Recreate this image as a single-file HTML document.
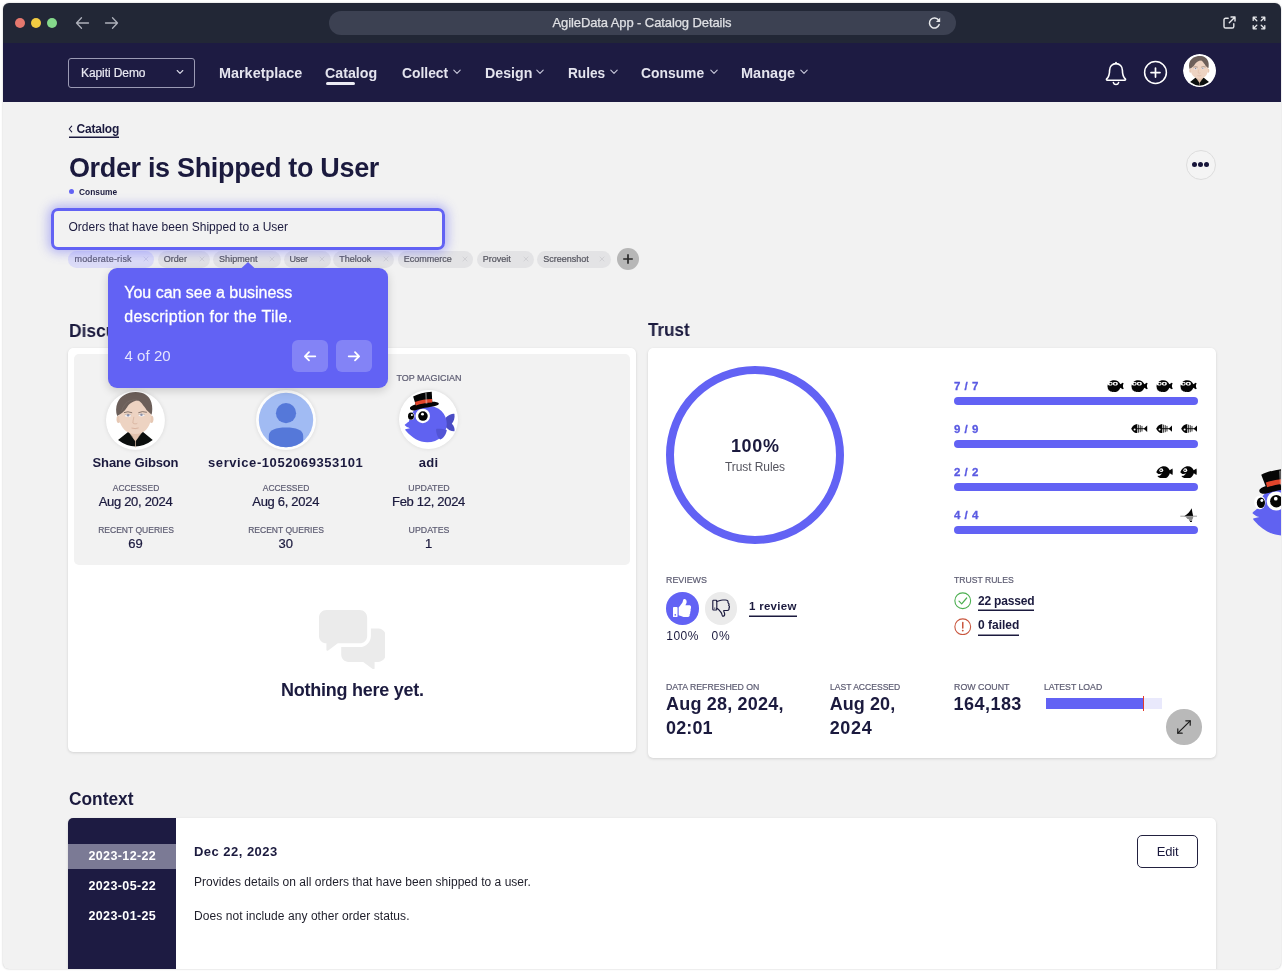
<!DOCTYPE html>
<html lang="en"><head><meta charset="utf-8"><title>AgileData App - Catalog Details</title>
<style>
html,body{margin:0;padding:0;}
body{width:1282px;height:975px;background:#fff;font-family:"Liberation Sans", sans-serif;position:relative;overflow:hidden;}
#win{position:absolute;left:3px;top:3px;width:1278px;height:966px;border-radius:6px;overflow:hidden;background:#f2f2f2;box-shadow:0 0 2px rgba(0,0,0,.25);}

#off{position:absolute;left:-3px;top:-3px;width:1282px;height:975px;will-change:transform;}
</style></head><body>
<div id="win"><div id="off">
<div style="position:absolute;left:0px;top:0px;width:1282px;height:43px;background:#222736;"></div>
<div style="position:absolute;left:15px;top:18px;width:10px;height:10px;background:#e5786e;border-radius:50%;"></div>
<div style="position:absolute;left:31px;top:18px;width:10px;height:10px;background:#f1cb42;border-radius:50%;"></div>
<div style="position:absolute;left:47px;top:18px;width:10px;height:10px;background:#85d98b;border-radius:50%;"></div>
<svg style="position:absolute;left:75px;top:16px;" width="45" height="14" viewBox="0 0 45 14"><g fill="none" stroke="#aeb1bb" stroke-width="1.300" stroke-linecap="round" stroke-linejoin="round"><path d="M13.5 7H1.5M6.5 1.8L1.5 7l5 5.2"/><path d="M30.5 7h12M37.5 1.8l5 5.2-5 5.2"/></g></svg>
<div style="position:absolute;left:329px;top:11px;width:627px;height:24px;background:#3c4152;border-radius:12px;"></div>
<div style="position:absolute;top:15.80px;font-size:13px;line-height:13px;font-weight:400;color:#dfe0e4;white-space:nowrap;letter-spacing:-0.1px;left:642px;transform:translateX(-50%);-webkit-text-stroke:.25px #dfe0e4;">AgileData App - Catalog Details</div>
<svg style="position:absolute;left:927px;top:16px;" width="15" height="14" viewBox="0 0 15 14"><path d="M11.6 4.2A5 5 0 1 0 12.2 8.6" fill="none" stroke="#e6e7ea" stroke-width="1.5" stroke-linecap="round"/><path d="M13.2 1.6v4.3H8.9z" fill="#e6e7ea"/></svg>
<svg style="position:absolute;left:1223px;top:16px;" width="13" height="13" viewBox="0 0 13 13"><g fill="none" stroke="#e6e7ea" stroke-width="1.4" stroke-linecap="round" stroke-linejoin="round"><path d="M5.2 2.2H2.6A1.6 1.6 0 0 0 1 3.8v6.6A1.6 1.6 0 0 0 2.6 12h6.6a1.6 1.6 0 0 0 1.6-1.6V7.8"/><path d="M8 1h4v4M12 1L6.3 6.7"/></g></svg>
<svg style="position:absolute;left:1252px;top:16px;" width="14" height="14" viewBox="0 0 14 14"><g fill="none" stroke="#e6e7ea" stroke-width="1.3" stroke-linecap="round" stroke-linejoin="round"><path d="M1.2 4.4V1.2h3.2M1.2 1.2l3.6 3.6"/><path d="M9.6 1.2h3.2v3.2M12.8 1.2L9.2 4.8"/><path d="M1.2 9.6v3.2h3.2M1.2 12.8l3.6-3.6"/><path d="M12.8 9.6v3.2H9.600M12.800 12.800L9.200 9.200"/></g></svg>
<div style="position:absolute;left:0px;top:43px;width:1282px;height:59px;background:#1d1b42;"></div>
<div style="position:absolute;left:68px;top:58px;width:127px;height:30px;box-sizing:border-box;border:1px solid #9b9ab4;border-radius:3px;"></div>
<div style="position:absolute;top:66.54px;font-size:12px;line-height:12px;font-weight:400;color:#e9e9f2;white-space:nowrap;letter-spacing:-0.09px;left:81px;-webkit-text-stroke:.2px #e9e9f2;">Kapiti Demo</div>
<svg style="position:absolute;left:176px;top:69px;" width="8" height="6" viewBox="0 0 8 6"><path d="M1.2 1.5L4 4.3l2.800-2.800" fill="none" stroke="#d8d8e6" stroke-width="1.1" stroke-linecap="round" stroke-linejoin="round"/></svg>
<div style="position:absolute;top:64.90px;font-size:15px;line-height:15px;font-weight:700;color:#e4e4ee;white-space:nowrap;left:218.7px;transform:scaleX(0.9605);transform-origin:0 50%;">Marketplace</div>
<div style="position:absolute;top:64.90px;font-size:15px;line-height:15px;font-weight:700;color:#e4e4ee;white-space:nowrap;left:325.2px;transform:scaleX(0.9482);transform-origin:0 50%;">Catalog</div>
<div style="position:absolute;top:64.90px;font-size:15px;line-height:15px;font-weight:700;color:#e4e4ee;white-space:nowrap;left:401.9px;transform:scaleX(0.9237);transform-origin:0 50%;">Collect</div>
<svg style="position:absolute;left:453px;top:68.5px;" width="8" height="6" viewBox="0 0 8 6"><path d="M0.800 1.200L4 4.400l3.200-3.200" fill="none" stroke="#c9c9dc" stroke-width="1.100" stroke-linecap="round" stroke-linejoin="round"/></svg>
<div style="position:absolute;top:64.90px;font-size:15px;line-height:15px;font-weight:700;color:#e4e4ee;white-space:nowrap;left:484.6px;transform:scaleX(0.9458);transform-origin:0 50%;">Design</div>
<svg style="position:absolute;left:536px;top:68.5px;" width="8" height="6" viewBox="0 0 8 6"><path d="M0.800 1.200L4 4.400l3.200-3.200" fill="none" stroke="#c9c9dc" stroke-width="1.100" stroke-linecap="round" stroke-linejoin="round"/></svg>
<div style="position:absolute;top:64.90px;font-size:15px;line-height:15px;font-weight:700;color:#e4e4ee;white-space:nowrap;left:568.2px;transform:scaleX(0.9113);transform-origin:0 50%;">Rules</div>
<svg style="position:absolute;left:610px;top:68.5px;" width="8" height="6" viewBox="0 0 8 6"><path d="M0.800 1.200L4 4.400l3.200-3.200" fill="none" stroke="#c9c9dc" stroke-width="1.100" stroke-linecap="round" stroke-linejoin="round"/></svg>
<div style="position:absolute;top:64.90px;font-size:15px;line-height:15px;font-weight:700;color:#e4e4ee;white-space:nowrap;left:641.3px;transform:scaleX(0.9235);transform-origin:0 50%;">Consume</div>
<svg style="position:absolute;left:710px;top:68.5px;" width="8" height="6" viewBox="0 0 8 6"><path d="M0.800 1.200L4 4.400l3.200-3.200" fill="none" stroke="#c9c9dc" stroke-width="1.100" stroke-linecap="round" stroke-linejoin="round"/></svg>
<div style="position:absolute;top:64.90px;font-size:15px;line-height:15px;font-weight:700;color:#e4e4ee;white-space:nowrap;left:741.3px;transform:scaleX(0.9687);transform-origin:0 50%;">Manage</div>
<svg style="position:absolute;left:800px;top:68.5px;" width="8" height="6" viewBox="0 0 8 6"><path d="M0.800 1.200L4 4.400l3.200-3.200" fill="none" stroke="#c9c9dc" stroke-width="1.100" stroke-linecap="round" stroke-linejoin="round"/></svg>
<div style="position:absolute;left:326px;top:82px;width:29px;height:3px;background:#ececf4;border-radius:2px;"></div>
<svg style="position:absolute;left:1104px;top:59.5px;" width="24" height="27" viewBox="0 0 24 27"><g fill="none" stroke="#fff" stroke-width="1.6" stroke-linecap="round" stroke-linejoin="round"><path d="M12 3.600c-3.700 0-6.400 2.900-6.400 6.600 0 5.200-1.500 7.300-2.900 8.700-.5.500-.2 1.400.6 1.400h17.400c.8 0 1.100-.9.600-1.400-1.400-1.400-2.900-3.500-2.900-8.700 0-3.700-2.700-6.600-6.400-6.600z"/><path d="M9.400 22.600a2.700 2.700 0 0 0 5.200 0"/><path d="M12 2.600v1"/></g></svg>
<svg style="position:absolute;left:1143px;top:60px;" width="25" height="25" viewBox="0 0 25 25"><g fill="none" stroke="#fff" stroke-linecap="round"><circle cx="12.500" cy="12.500" r="10.900" stroke-width="1.500"/><path d="M8 12.600h9M12.500 8.100v9" stroke-width="1.700"/></g></svg>
<svg style="position:absolute;left:68.3px;top:124.9px;" width="5" height="8" viewBox="0 0 5 8"><path d="M3.700 1.200L1.200 4 3.700 6.800" fill="none" stroke="#1b1a3e" stroke-width="1.100" stroke-linecap="round" stroke-linejoin="round"/></svg>
<div style="position:absolute;top:123.44px;font-size:12px;line-height:12px;font-weight:700;color:#1b1a3e;white-space:nowrap;letter-spacing:-0.2px;left:76.5px;">Catalog</div>
<div style="position:absolute;left:68.5px;top:136px;width:50.5px;height:1px;background:#1b1a3e;opacity:.5"></div>
<div style="position:absolute;left:68.5px;top:137px;width:50.5px;height:1px;background:#1b1a3e"></div>
<div style="position:absolute;top:155.14px;font-size:27px;line-height:27px;font-weight:700;color:#1b1a3e;white-space:nowrap;letter-spacing:-0.33px;left:68.9px;">Order is Shipped to User</div>
<div style="position:absolute;left:68.7px;top:189.3px;width:5px;height:5px;background:#6262f4;border-radius:50%;"></div>
<div style="position:absolute;top:187.06px;font-size:9.5px;line-height:9.5px;font-weight:700;color:#1b1a3e;white-space:nowrap;left:79px;transform:scaleX(0.8791);transform-origin:0 50%;">Consume</div>
<div style="position:absolute;left:1186px;top:150px;width:30px;height:30px;background:#f4f4f4;box-sizing:border-box;border:1px solid #dcdcdc;border-radius:50%;"></div>
<div style="position:absolute;left:1192.1px;top:162.2px;width:5px;height:5px;background:#17153a;border-radius:50%;"></div>
<div style="position:absolute;left:1198.2px;top:162.2px;width:5px;height:5px;background:#17153a;border-radius:50%;"></div>
<div style="position:absolute;left:1204.3px;top:162.2px;width:5px;height:5px;background:#17153a;border-radius:50%;"></div>
<div style="position:absolute;top:220.84px;font-size:12px;line-height:12px;font-weight:400;color:#1b1a3e;white-space:nowrap;letter-spacing:0.02px;left:68.5px;">Orders that have been Shipped to a User</div>
<div style="position:absolute;left:68.3px;top:251px;width:86.2px;height:16.5px;background:#dcdcf7;border-radius:8.500px;"></div>
<div style="position:absolute;top:254.68px;font-size:9px;line-height:9px;font-weight:400;color:#5d5c78;white-space:nowrap;letter-spacing:0.17px;left:74.5px;-webkit-text-stroke:.2px;">moderate-risk</div>
<svg style="position:absolute;left:143.0px;top:256.3px;" width="6" height="6" viewBox="0 0 6 6"><path d="M0.700 0.700l4.600 4.600M5.300 0.700L0.700 5.300" stroke="#c4c4e6" stroke-width="0.900" fill="none"/></svg>
<div style="position:absolute;left:158px;top:251px;width:52px;height:16.5px;background:#e3e3e5;border-radius:8.500px;"></div>
<div style="position:absolute;top:254.68px;font-size:9px;line-height:9px;font-weight:400;color:#55555f;white-space:nowrap;letter-spacing:0.06px;left:163.7px;-webkit-text-stroke:.2px;">Order</div>
<svg style="position:absolute;left:198.5px;top:256.3px;" width="6" height="6" viewBox="0 0 6 6"><path d="M0.700 0.700l4.600 4.600M5.300 0.700L0.700 5.300" stroke="#cfcfd3" stroke-width="0.900" fill="none"/></svg>
<div style="position:absolute;left:213px;top:251px;width:67.5px;height:16.5px;background:#e3e3e5;border-radius:8.500px;"></div>
<div style="position:absolute;top:254.68px;font-size:9px;line-height:9px;font-weight:400;color:#55555f;white-space:nowrap;letter-spacing:0.07px;left:219px;-webkit-text-stroke:.2px;">Shipment</div>
<svg style="position:absolute;left:269.0px;top:256.3px;" width="6" height="6" viewBox="0 0 6 6"><path d="M0.700 0.700l4.600 4.600M5.300 0.700L0.700 5.300" stroke="#cfcfd3" stroke-width="0.900" fill="none"/></svg>
<div style="position:absolute;left:284px;top:251px;width:46.5px;height:16.5px;background:#e3e3e5;border-radius:8.500px;"></div>
<div style="position:absolute;top:254.68px;font-size:9px;line-height:9px;font-weight:400;color:#55555f;white-space:nowrap;letter-spacing:-0.17px;left:289.5px;-webkit-text-stroke:.2px;">User</div>
<svg style="position:absolute;left:319.0px;top:256.3px;" width="6" height="6" viewBox="0 0 6 6"><path d="M0.700 0.700l4.600 4.600M5.300 0.700L0.700 5.300" stroke="#cfcfd3" stroke-width="0.900" fill="none"/></svg>
<div style="position:absolute;left:333.3px;top:251px;width:61.0px;height:16.5px;background:#e3e3e5;border-radius:8.500px;"></div>
<div style="position:absolute;top:254.68px;font-size:9px;line-height:9px;font-weight:400;color:#55555f;white-space:nowrap;left:339.3px;-webkit-text-stroke:.2px;">Thelook</div>
<svg style="position:absolute;left:382.8px;top:256.3px;" width="6" height="6" viewBox="0 0 6 6"><path d="M0.700 0.700l4.600 4.600M5.300 0.700L0.700 5.300" stroke="#cfcfd3" stroke-width="0.900" fill="none"/></svg>
<div style="position:absolute;left:397.7px;top:251px;width:75.5px;height:16.5px;background:#e3e3e5;border-radius:8.500px;"></div>
<div style="position:absolute;top:254.68px;font-size:9px;line-height:9px;font-weight:400;color:#55555f;white-space:nowrap;left:403.7px;-webkit-text-stroke:.2px;">Ecommerce</div>
<svg style="position:absolute;left:461.7px;top:256.3px;" width="6" height="6" viewBox="0 0 6 6"><path d="M0.700 0.700l4.600 4.600M5.300 0.700L0.700 5.300" stroke="#cfcfd3" stroke-width="0.900" fill="none"/></svg>
<div style="position:absolute;left:476.7px;top:251px;width:57.50000000000006px;height:16.5px;background:#e3e3e5;border-radius:8.500px;"></div>
<div style="position:absolute;top:254.68px;font-size:9px;line-height:9px;font-weight:400;color:#55555f;white-space:nowrap;left:482.7px;-webkit-text-stroke:.2px;">Proveit</div>
<svg style="position:absolute;left:522.7px;top:256.3px;" width="6" height="6" viewBox="0 0 6 6"><path d="M0.700 0.700l4.600 4.600M5.300 0.700L0.700 5.300" stroke="#cfcfd3" stroke-width="0.900" fill="none"/></svg>
<div style="position:absolute;left:537.2px;top:251px;width:73.5px;height:16.5px;background:#e3e3e5;border-radius:8.500px;"></div>
<div style="position:absolute;top:254.68px;font-size:9px;line-height:9px;font-weight:400;color:#55555f;white-space:nowrap;left:543.2px;-webkit-text-stroke:.2px;">Screenshot</div>
<svg style="position:absolute;left:599.2px;top:256.3px;" width="6" height="6" viewBox="0 0 6 6"><path d="M0.700 0.700l4.600 4.600M5.300 0.700L0.700 5.300" stroke="#cfcfd3" stroke-width="0.900" fill="none"/></svg>
<div style="position:absolute;left:617.3px;top:248px;width:22px;height:22px;background:#b7b7b7;border-radius:50%;"></div>
<svg style="position:absolute;left:622.3px;top:253px;" width="12" height="12" viewBox="0 0 12 12"><path d="M6 1.200v9.600M1.200 6h9.600" stroke="#2a2a2a" stroke-width="1.700" fill="none"/></svg>
<div style="position:absolute;top:322.06px;font-size:18px;line-height:18px;font-weight:700;color:#1b1a3e;white-space:nowrap;left:68.5px;transform:scaleX(0.9677);transform-origin:0 50%;">Discussion</div>
<div style="position:absolute;top:321.26px;font-size:18px;line-height:18px;font-weight:700;color:#1b1a3e;white-space:nowrap;left:648.3px;transform:scaleX(0.9452);transform-origin:0 50%;">Trust</div>
<div style="position:absolute;top:790.36px;font-size:18px;line-height:18px;font-weight:700;color:#1b1a3e;white-space:nowrap;left:68.5px;transform:scaleX(0.9626);transform-origin:0 50%;">Context</div>
<div style="position:absolute;left:68px;top:348px;width:568px;height:404px;background:#fff;border-radius:5px;box-shadow:0 1px 3px rgba(0,0,0,.13),0 0 1px rgba(0,0,0,.08);"></div>
<div style="position:absolute;left:74px;top:354px;width:556px;height:211px;background:#f2f2f2;border-radius:5px;"></div>
<div style="position:absolute;left:648px;top:348px;width:568px;height:410px;background:#fff;border-radius:5px;box-shadow:0 1px 3px rgba(0,0,0,.13),0 0 1px rgba(0,0,0,.08);"></div>
<div style="position:absolute;top:455.70px;font-size:13px;line-height:13px;font-weight:700;color:#1b1a3e;white-space:nowrap;letter-spacing:-0.13px;left:135.5px;transform:translateX(-50%);">Shane Gibson</div>
<div style="position:absolute;top:483.16px;font-size:9.5px;line-height:9.5px;font-weight:400;color:#5d5c72;white-space:nowrap;left:135.5px;transform:translateX(-50%) scaleX(0.8893);-webkit-text-stroke:.22px;">ACCESSED</div>
<div style="position:absolute;top:495.20px;font-size:13px;line-height:13px;font-weight:400;color:#1b1a3e;white-space:nowrap;letter-spacing:-0.3px;left:135.5px;transform:translateX(-50%);-webkit-text-stroke:.22px;">Aug 20, 2024</div>
<div style="position:absolute;top:525.26px;font-size:9.5px;line-height:9.5px;font-weight:400;color:#5d5c72;white-space:nowrap;left:135.5px;transform:translateX(-50%) scaleX(0.8975);-webkit-text-stroke:.22px;">RECENT QUERIES</div>
<div style="position:absolute;top:537.20px;font-size:13px;line-height:13px;font-weight:400;color:#1b1a3e;white-space:nowrap;left:135.5px;transform:translateX(-50%);-webkit-text-stroke:.22px;">69</div>
<div style="position:absolute;top:455.70px;font-size:13px;line-height:13px;font-weight:700;color:#1b1a3e;white-space:nowrap;letter-spacing:0.58px;left:285.7px;transform:translateX(-50%);">service-1052069353101</div>
<div style="position:absolute;top:483.16px;font-size:9.5px;line-height:9.5px;font-weight:400;color:#5d5c72;white-space:nowrap;left:285.7px;transform:translateX(-50%) scaleX(0.8893);-webkit-text-stroke:.22px;">ACCESSED</div>
<div style="position:absolute;top:495.20px;font-size:13px;line-height:13px;font-weight:400;color:#1b1a3e;white-space:nowrap;letter-spacing:-0.3px;left:285.7px;transform:translateX(-50%);-webkit-text-stroke:.22px;">Aug 6, 2024</div>
<div style="position:absolute;top:525.26px;font-size:9.5px;line-height:9.5px;font-weight:400;color:#5d5c72;white-space:nowrap;left:285.7px;transform:translateX(-50%) scaleX(0.8975);-webkit-text-stroke:.22px;">RECENT QUERIES</div>
<div style="position:absolute;top:537.20px;font-size:13px;line-height:13px;font-weight:400;color:#1b1a3e;white-space:nowrap;left:285.7px;transform:translateX(-50%);-webkit-text-stroke:.22px;">30</div>
<div style="position:absolute;top:372.66px;font-size:9.5px;line-height:9.5px;font-weight:400;color:#5d5c72;white-space:nowrap;left:428.5px;transform:translateX(-50%) scaleX(0.9463);-webkit-text-stroke:.22px;">TOP MAGICIAN</div>
<div style="position:absolute;top:455.70px;font-size:13px;line-height:13px;font-weight:700;color:#1b1a3e;white-space:nowrap;letter-spacing:0.2px;left:428.5px;transform:translateX(-50%);">adi</div>
<div style="position:absolute;top:483.16px;font-size:9.5px;line-height:9.5px;font-weight:400;color:#5d5c72;white-space:nowrap;left:428.5px;transform:translateX(-50%) scaleX(0.9258);-webkit-text-stroke:.22px;">UPDATED</div>
<div style="position:absolute;top:495.20px;font-size:13px;line-height:13px;font-weight:400;color:#1b1a3e;white-space:nowrap;letter-spacing:-0.3px;left:428.5px;transform:translateX(-50%);-webkit-text-stroke:.22px;">Feb 12, 2024</div>
<div style="position:absolute;top:525.26px;font-size:9.5px;line-height:9.5px;font-weight:400;color:#5d5c72;white-space:nowrap;left:428.5px;transform:translateX(-50%) scaleX(0.9241);-webkit-text-stroke:.22px;">UPDATES</div>
<div style="position:absolute;top:537.20px;font-size:13px;line-height:13px;font-weight:400;color:#1b1a3e;white-space:nowrap;left:428.5px;transform:translateX(-50%);-webkit-text-stroke:.22px;">1</div>
<svg style="position:absolute;left:106.19999999999999px;top:390.8px;border-radius:50%;box-shadow:0 0 4px rgba(0,0,0,.10);" width="58.8" height="58.8" viewBox="0 0 100 100"><defs><clipPath id="hc135"><circle cx="50" cy="50" r="49.500"/></clipPath></defs><circle cx="50" cy="50" r="50" fill="#fff"/><g clip-path="url(#hc135)"><g transform=""><path d="M38 69.500 L20.500 83.500 Q50 105.500 79.500 83.500 L62.500 69.500 L50 82 Z" fill="#0c0f0e"/><path d="M39.500 60 L39.500 71.500 L50 86 L60.800 71.500 L60.800 60 Z" fill="#e2c2ad"/><path d="M49.400 82 L50.600 82 L50.600 96 L49.400 96 Z" fill="#e2c2ad"/><path d="M38.500 70.500 L45 78.500 M62 70.500 L55.500 78.500" stroke="#262a29" stroke-width=".8" fill="none"/><ellipse cx="21.300" cy="48" rx="3.400" ry="6.300" fill="#e6c8b4"/><ellipse cx="77.300" cy="48" rx="3.400" ry="6.300" fill="#e6c8b4"/><path d="M22 36 C22 6 77 6 77 36 L76 50 C74 61 66 73 50 73 C34 73 25 61 23 50 Z" fill="#edd3c2"/><path d="M19 42.500 C16.500 36 16.500 27 19.500 20 C24 9 36 1.800 50.500 1.800 C64 1.800 74 8 77.300 20 C79.300 27 79 35 77.500 40.500 C74.500 37.500 71.500 34.500 68.900 32.300 C66.500 28 64.500 26 62.800 24 C60.500 20 58.500 18 55.500 16.500 C53 16 51 16.300 49.400 17 C45 18.500 41 21 38.400 23.800 C36 27 35 29 33.500 31 C32 33 31 34 29.900 34.800 C27 37.500 24 39.500 19 42.500 Z" fill="#6c5f5a"/><path d="M55.500 16.500 C50 14 42 15 36 19 C31 23 28 29 26.500 34" stroke="#7d706a" stroke-width="1" fill="none"/><path d="M30.500 36.800 Q37 33.800 44.500 37" stroke="#5b4d47" stroke-width="1.200" fill="none"/><path d="M55 37 Q62 33.500 69.500 36.300" stroke="#5b4d47" stroke-width="1.200" fill="none"/><ellipse cx="37.300" cy="41.200" rx="5.400" ry="2.600" fill="#f4f4f7"/><ellipse cx="60.500" cy="40.600" rx="5.400" ry="2.600" fill="#f4f4f7"/><circle cx="37.600" cy="41.200" r="2.100" fill="#8b93ae"/><circle cx="60.300" cy="40.600" r="2.100" fill="#8b93ae"/><path d="M31.800 40.600 Q37 37.800 42.800 40.800" stroke="#8d7468" stroke-width=".7" fill="none"/><path d="M55 40.200 Q60.500 37.300 66 40" stroke="#8d7468" stroke-width=".7" fill="none"/><path d="M47.300 44 C46.800 49 45.300 52.500 45.800 54.500 C47.500 56.300 51.500 56.300 53.300 54.800" stroke="#d2ab95" stroke-width="1.100" fill="none"/><path d="M43.500 63 Q49.500 65 55.500 62.800" stroke="#d6ad99" stroke-width="1.400" fill="none"/></g></g></svg>
<svg style="position:absolute;left:1182.8999999999999px;top:53.8px;border-radius:50%;" width="33.4" height="33.4" viewBox="0 0 100 100"><defs><clipPath id="hc1199"><circle cx="50" cy="50" r="49.500"/></clipPath></defs><circle cx="50" cy="50" r="50" fill="#fff"/><g clip-path="url(#hc1199)"><g transform="translate(1.500 4) scale(.96)"><path d="M38 69.500 L20.500 83.500 Q50 105.500 79.500 83.500 L62.500 69.500 L50 82 Z" fill="#0c0f0e"/><path d="M39.500 60 L39.500 71.500 L50 86 L60.800 71.500 L60.800 60 Z" fill="#e2c2ad"/><path d="M49.400 82 L50.600 82 L50.600 96 L49.400 96 Z" fill="#e2c2ad"/><path d="M38.500 70.500 L45 78.500 M62 70.500 L55.500 78.500" stroke="#262a29" stroke-width=".8" fill="none"/><ellipse cx="21.300" cy="48" rx="3.400" ry="6.300" fill="#e6c8b4"/><ellipse cx="77.300" cy="48" rx="3.400" ry="6.300" fill="#e6c8b4"/><path d="M22 36 C22 6 77 6 77 36 L76 50 C74 61 66 73 50 73 C34 73 25 61 23 50 Z" fill="#edd3c2"/><path d="M19 42.500 C16.500 36 16.500 27 19.500 20 C24 9 36 1.800 50.500 1.800 C64 1.800 74 8 77.300 20 C79.300 27 79 35 77.500 40.500 C74.500 37.500 71.500 34.500 68.900 32.300 C66.500 28 64.500 26 62.800 24 C60.500 20 58.500 18 55.500 16.500 C53 16 51 16.300 49.400 17 C45 18.500 41 21 38.400 23.800 C36 27 35 29 33.500 31 C32 33 31 34 29.900 34.800 C27 37.500 24 39.500 19 42.500 Z" fill="#6c5f5a"/><path d="M55.500 16.500 C50 14 42 15 36 19 C31 23 28 29 26.500 34" stroke="#7d706a" stroke-width="1" fill="none"/><path d="M30.500 36.800 Q37 33.800 44.500 37" stroke="#5b4d47" stroke-width="1.200" fill="none"/><path d="M55 37 Q62 33.500 69.500 36.300" stroke="#5b4d47" stroke-width="1.200" fill="none"/><ellipse cx="37.300" cy="41.200" rx="5.400" ry="2.600" fill="#f4f4f7"/><ellipse cx="60.500" cy="40.600" rx="5.400" ry="2.600" fill="#f4f4f7"/><circle cx="37.600" cy="41.200" r="2.100" fill="#8b93ae"/><circle cx="60.300" cy="40.600" r="2.100" fill="#8b93ae"/><path d="M31.800 40.600 Q37 37.800 42.800 40.800" stroke="#8d7468" stroke-width=".7" fill="none"/><path d="M55 40.200 Q60.500 37.300 66 40" stroke="#8d7468" stroke-width=".7" fill="none"/><path d="M47.300 44 C46.800 49 45.300 52.500 45.800 54.500 C47.500 56.300 51.500 56.300 53.300 54.800" stroke="#d2ab95" stroke-width="1.100" fill="none"/><path d="M43.500 63 Q49.500 65 55.500 62.800" stroke="#d6ad99" stroke-width="1.400" fill="none"/></g></g></svg>
<svg style="position:absolute;left:255.8px;top:389.8px;border-radius:50%;box-shadow:0 0 4px rgba(0,0,0,.10);" width="60" height="60" viewBox="0 0 60 60"><defs><clipPath id="gp"><circle cx="30" cy="30" r="27.200"/></clipPath></defs><circle cx="30" cy="30" r="30" fill="#fdfdfd"/><circle cx="30" cy="30" r="27.200" fill="#a1bbf3"/><g clip-path="url(#gp)" fill="#5578d9"><circle cx="30" cy="23.200" r="10.100"/><path d="M12.800 60 V46 C12.800 40 20 37.600 30 37.600 S47.200 40 47.200 46 V60 Z"/></g></svg>
<svg style="position:absolute;left:399.0px;top:390.3px;border-radius:50%;box-shadow:0 0 4px rgba(0,0,0,.10);" width="59.0" height="59.0" viewBox="0 0 100.0 100"><circle cx="50" cy="50" r="50" fill="#fff"/><path d="M79 47 C84 42 90 40 94 40.500 C95 47 93 53 89.500 57 C93 60 95 65 94 70 C89 70.500 83 67 79.500 63 Z" fill="#4a4cc4"/><path d="M9.500 59.500 C12 57 14 55.500 17 53.500 C18 38 30 26.500 48 26.500 C68 26.500 81 40 81 57 C81 75 67 88.500 48 88.500 C34 88.500 22 81 12 69.500 C11 68.500 10.500 67.500 10.500 66.500 L18.500 64.800 C15 63.800 11.500 62 9.500 59.500 Z" fill="#6062f1"/><path d="M63 66 C68 65.500 76 66.500 81 68 C80 76 75 82 70 84 C65 80 62.500 72 63 66 Z" fill="#5254d6"/><ellipse cx="20.600" cy="44.200" rx="5.600" ry="6.600" fill="#fff"/><ellipse cx="20.300" cy="44.300" rx="5" ry="6.100" fill="#050505"/><circle cx="21.800" cy="42.200" r="1.700" fill="#fff"/><path d="M25 38.500 C28 41 28 50 24 52.500 L31 52.500 L31 38.500 Z" fill="#6062f1"/><circle cx="40.300" cy="44" r="12.300" fill="#fff"/><circle cx="40.600" cy="44.200" r="8.100" fill="#050505"/><circle cx="39.800" cy="41" r="2.400" fill="#fff"/><path d="M18.500 31 C18 27 27 24 40 21.500 C53 19 67 19.500 67.500 23 C68 26 60 28 48 29.500 C36 31 28 35 22.500 34.500 C20 34 18.800 32.800 18.500 31 Z" fill="#050505"/><path d="M24 11 C32 6.500 44 3.500 55.500 3 L56.500 22.500 C46 23 37 24.500 29 27.500 Z" fill="#050505"/><path d="M27 20.200 C36 17 46 15.500 56 15.200 L56.300 21.300 C46 21.800 37 23.300 28.600 26.300 Z" fill="#e2452b"/><path d="M44 4.800 L47 4.400 L48.200 23.300 L45.200 23.600 Z" fill="#fff" fill-opacity=".35"/></svg>
<svg style="position:absolute;left:1245px;top:467.3px;" width="36" height="77.3" viewBox="0 0 46.57179818887452 100"><path d="M79 47 C84 42 90 40 94 40.500 C95 47 93 53 89.500 57 C93 60 95 65 94 70 C89 70.500 83 67 79.500 63 Z" fill="#4a4cc4"/><path d="M9.500 59.500 C12 57 14 55.500 17 53.500 C18 38 30 26.500 48 26.500 C68 26.500 81 40 81 57 C81 75 67 88.500 48 88.500 C34 88.500 22 81 12 69.500 C11 68.500 10.500 67.500 10.500 66.500 L18.500 64.800 C15 63.800 11.500 62 9.500 59.500 Z" fill="#6062f1"/><path d="M63 66 C68 65.500 76 66.500 81 68 C80 76 75 82 70 84 C65 80 62.500 72 63 66 Z" fill="#5254d6"/><ellipse cx="19.200" cy="45.800" rx="7.300" ry="9" fill="#fff"/><ellipse cx="20.600" cy="46.200" rx="5.300" ry="6.800" fill="#050505"/><circle cx="21.800" cy="43.300" r="1.900" fill="#fff"/><path d="M25.500 38 C28.500 41 28.500 52 24.500 55.500 L32 55.500 L32 38 Z" fill="#6062f1"/><circle cx="40.300" cy="44" r="12.300" fill="#fff"/><circle cx="40.600" cy="44.200" r="8.100" fill="#050505"/><circle cx="39.800" cy="41" r="2.400" fill="#fff"/><path d="M18.500 31 C18 27 27 24 40 21.500 C53 19 67 19.500 67.500 23 C68 26 60 28 48 29.500 C36 31 28 35 22.500 34.500 C20 34 18.800 32.800 18.500 31 Z" fill="#050505"/><path d="M21 10 C30 5.500 43 2.500 55.500 2 L56.500 22.500 C46 23 37 24.500 27.500 27 Z" fill="#050505"/><path d="M27 20.200 C36 17 46 15.500 56 15.200 L56.300 21.300 C46 21.800 37 23.300 28.600 26.300 Z" fill="#e2452b"/><path d="M44 4.800 L47 4.400 L48.200 23.300 L45.200 23.600 Z" fill="#fff" fill-opacity=".35"/></svg>
<svg style="position:absolute;left:318.7px;top:609.8px;" width="66.7" height="59.3" viewBox="0 0 576 512"><path fill="#ebebeb" d="M416 224V64c0-35.300-28.700-64-64-64H64C28.700 0 0 28.700 0 64v160c0 35.300 28.700 64 64 64v54.200c0 8 9.100 12.600 15.500 7.800l82.800-62.100H352c35.300.1 64-28.600 64-63.900zm96-64h-64v64c0 52.900-43.100 96-96 96H192v64c0 35.300 28.700 64 64 64h125.700l82.800 62.100c6.400 4.800 15.500.2 15.500-7.800V448h32c35.300 0 64-28.700 64-64V224c0-35.300-28.700-64-64-64z"/></svg>
<div style="position:absolute;top:680.56px;font-size:18px;line-height:18px;font-weight:700;color:#1b1a3e;white-space:nowrap;letter-spacing:-0.25px;left:352.3px;transform:translateX(-50%);">Nothing here yet.</div>
<svg style="position:absolute;left:666px;top:366px;" width="178" height="178" viewBox="0 0 178 178"><circle cx="89" cy="89" r="85" fill="none" stroke="#6262f4" stroke-width="8"/></svg>
<div style="position:absolute;top:437.46px;font-size:18px;line-height:18px;font-weight:700;color:#1b1a3e;white-space:nowrap;letter-spacing:0.7px;left:755.3px;transform:translateX(-50%);">100%</div>
<div style="position:absolute;top:461.04px;font-size:12px;line-height:12px;font-weight:400;color:#55555f;white-space:nowrap;letter-spacing:-0.09px;left:755px;transform:translateX(-50%);">Trust Rules</div>
<div style="position:absolute;left:954px;top:397px;width:244px;height:8px;background:#6262f4;border-radius:4px;"></div>
<div style="position:absolute;top:380.87px;font-size:11.5px;line-height:11.5px;font-weight:700;color:#5a5ae2;white-space:nowrap;letter-spacing:0.5px;left:954px;-webkit-text-stroke:.3px #5a5ae2;">7 / 7</div>
<div style="position:absolute;left:954px;top:440px;width:244px;height:8px;background:#6262f4;border-radius:4px;"></div>
<div style="position:absolute;top:423.87px;font-size:11.5px;line-height:11.5px;font-weight:700;color:#5a5ae2;white-space:nowrap;letter-spacing:0.5px;left:954px;-webkit-text-stroke:.3px #5a5ae2;">9 / 9</div>
<div style="position:absolute;left:954px;top:483px;width:244px;height:8px;background:#6262f4;border-radius:4px;"></div>
<div style="position:absolute;top:466.87px;font-size:11.5px;line-height:11.5px;font-weight:700;color:#5a5ae2;white-space:nowrap;letter-spacing:0.5px;left:954px;-webkit-text-stroke:.3px #5a5ae2;">2 / 2</div>
<div style="position:absolute;left:954px;top:526px;width:244px;height:8px;background:#6262f4;border-radius:4px;"></div>
<div style="position:absolute;top:509.87px;font-size:11.5px;line-height:11.5px;font-weight:700;color:#5a5ae2;white-space:nowrap;letter-spacing:0.5px;left:954px;-webkit-text-stroke:.3px #5a5ae2;">4 / 4</div>
<svg style="position:absolute;left:1106.6px;top:379.7px;" width="17" height="12.4" viewBox="0 0 17 12.400"><path d="M0.500 6.600C0.500 2.900 3.300 0.200 7.100 0.200c3 0 5.300 1.600 6.300 4.100l2.300-1.500c.4.100.7.300.9.600-.5.900-.7 1.700-.7 2.500 0 .900.300 1.800.8 2.700-.2.300-.5.500-.9.600l-2.500-1.500c-.9 2.800-3.300 4.500-6.200 4.500l-1-.5-.8.400-.9-.7-1 .2-.6-.9-1-.1-.3-1-.8-.5.300-1-.5-.8z" fill="#050505"/><rect x="0.700" y="1.900" width="4.900" height="3.600" rx="1.500" fill="#fff"/><rect x="5.900" y="1.900" width="4.900" height="3.600" rx="1.500" fill="#fff"/><circle cx="3.500" cy="3.800" r="1.050" fill="#050505"/><circle cx="8.300" cy="3.800" r="1.050" fill="#050505"/><path d="M0 2.600h1.200" stroke="#fff" stroke-width=".7"/></svg>
<svg style="position:absolute;left:1130.8px;top:379.7px;" width="17" height="12.4" viewBox="0 0 17 12.400"><path d="M0.500 6.600C0.500 2.900 3.300 0.200 7.100 0.200c3 0 5.300 1.600 6.300 4.100l2.300-1.500c.4.100.7.300.9.600-.5.900-.7 1.700-.7 2.500 0 .900.300 1.800.8 2.700-.2.300-.5.500-.9.600l-2.500-1.500c-.9 2.800-3.300 4.500-6.200 4.500l-1-.5-.8.400-.9-.7-1 .2-.6-.9-1-.1-.3-1-.8-.5.300-1-.5-.8z" fill="#050505"/><rect x="0.700" y="1.900" width="4.900" height="3.600" rx="1.500" fill="#fff"/><rect x="5.900" y="1.900" width="4.900" height="3.600" rx="1.500" fill="#fff"/><circle cx="3.500" cy="3.800" r="1.050" fill="#050505"/><circle cx="8.300" cy="3.800" r="1.050" fill="#050505"/><path d="M0 2.600h1.200" stroke="#fff" stroke-width=".7"/></svg>
<svg style="position:absolute;left:1155.6px;top:379.7px;" width="17" height="12.4" viewBox="0 0 17 12.400"><path d="M0.500 6.600C0.500 2.900 3.300 0.200 7.100 0.200c3 0 5.300 1.600 6.300 4.100l2.300-1.500c.4.100.7.300.9.600-.5.900-.7 1.700-.7 2.500 0 .900.300 1.800.8 2.700-.2.300-.5.500-.9.600l-2.500-1.500c-.9 2.800-3.300 4.500-6.200 4.500l-1-.5-.8.400-.9-.7-1 .2-.6-.9-1-.1-.3-1-.8-.5.300-1-.5-.8z" fill="#050505"/><rect x="0.700" y="1.900" width="4.900" height="3.600" rx="1.500" fill="#fff"/><rect x="5.900" y="1.900" width="4.900" height="3.600" rx="1.500" fill="#fff"/><circle cx="3.500" cy="3.800" r="1.050" fill="#050505"/><circle cx="8.300" cy="3.800" r="1.050" fill="#050505"/><path d="M0 2.600h1.200" stroke="#fff" stroke-width=".7"/></svg>
<svg style="position:absolute;left:1180px;top:379.7px;" width="17" height="12.4" viewBox="0 0 17 12.400"><path d="M0.500 6.600C0.500 2.900 3.300 0.200 7.100 0.200c3 0 5.300 1.600 6.300 4.100l2.300-1.500c.4.100.7.300.9.600-.5.900-.7 1.700-.7 2.500 0 .900.300 1.800.8 2.700-.2.300-.5.500-.9.600l-2.500-1.500c-.9 2.800-3.300 4.500-6.200 4.500l-1-.5-.8.400-.9-.7-1 .2-.6-.9-1-.1-.3-1-.8-.5.300-1-.5-.8z" fill="#050505"/><rect x="0.700" y="1.900" width="4.900" height="3.600" rx="1.500" fill="#fff"/><rect x="5.900" y="1.900" width="4.900" height="3.600" rx="1.500" fill="#fff"/><circle cx="3.500" cy="3.800" r="1.050" fill="#050505"/><circle cx="8.300" cy="3.800" r="1.050" fill="#050505"/><path d="M0 2.600h1.200" stroke="#fff" stroke-width=".7"/></svg>
<svg style="position:absolute;left:1131.2px;top:423.9px;" width="16.4" height="9.4" viewBox="0 0 16.400 9.400"><path d="M0.200 4.700C1.600 2 3.800 0.300 6.300 0.100v9.200C3.800 9.100 1.600 7.400 0.200 4.700z" fill="#050505"/><circle cx="3.600" cy="5.600" r="1" fill="#fff"/><path d="M6 4.700h8" stroke="#050505" stroke-width=".9"/><path d="M7.600 0.700v8M9.300 1.200v7M11 1.900v5.600" stroke="#050505" stroke-width=".8"/><path d="M16.200 1.400v6.600l-3.600-3.300z" fill="#050505"/></svg>
<svg style="position:absolute;left:1156px;top:423.9px;" width="16.4" height="9.4" viewBox="0 0 16.400 9.400"><path d="M0.200 4.700C1.600 2 3.800 0.300 6.300 0.100v9.200C3.800 9.100 1.600 7.400 0.200 4.700z" fill="#050505"/><circle cx="3.600" cy="5.600" r="1" fill="#fff"/><path d="M6 4.700h8" stroke="#050505" stroke-width=".9"/><path d="M7.600 0.700v8M9.300 1.200v7M11 1.900v5.600" stroke="#050505" stroke-width=".8"/><path d="M16.200 1.400v6.600l-3.600-3.300z" fill="#050505"/></svg>
<svg style="position:absolute;left:1180.6px;top:423.9px;" width="16.4" height="9.4" viewBox="0 0 16.400 9.400"><path d="M0.200 4.700C1.600 2 3.800 0.300 6.300 0.100v9.200C3.800 9.100 1.600 7.400 0.200 4.700z" fill="#050505"/><circle cx="3.600" cy="5.600" r="1" fill="#fff"/><path d="M6 4.700h8" stroke="#050505" stroke-width=".9"/><path d="M7.600 0.700v8M9.300 1.200v7M11 1.900v5.600" stroke="#050505" stroke-width=".8"/><path d="M16.200 1.400v6.600l-3.600-3.300z" fill="#050505"/></svg>
<svg style="position:absolute;left:1156px;top:465.7px;" width="16.8" height="12.8" viewBox="0 0 16.800 12.800"><path d="M0.300 6.300C1.600 2.600 4.600 0.200 8 0.200c2.800 0 4.900 1.700 5.700 4.100l2.800-1.900c.3 2.200.3 4.600 0 6.700l-2.700-1.800c-.8 3.200-3.300 5.300-6.400 5.300-2.500 0-4.700-.9-6-2.600l3.600-1.100c-1.700-.3-3.400-1.300-4.700-2.600z" fill="#050505"/><circle cx="5.300" cy="4.200" r="1.900" fill="#fff"/><circle cx="5" cy="4.300" r=".8" fill="#050505"/><path d="M1.700 8.300l4.600-.9-3.400 2.500z" fill="#fff"/></svg>
<svg style="position:absolute;left:1180.4px;top:465.7px;" width="16.8" height="12.8" viewBox="0 0 16.800 12.800"><path d="M0.300 6.300C1.600 2.600 4.600 0.200 8 0.200c2.800 0 4.900 1.700 5.700 4.100l2.800-1.900c.3 2.200.3 4.600 0 6.700l-2.700-1.800c-.8 3.200-3.300 5.300-6.400 5.300-2.500 0-4.700-.9-6-2.600l3.600-1.100c-1.700-.3-3.400-1.300-4.700-2.600z" fill="#050505"/><circle cx="5.300" cy="4.200" r="1.900" fill="#fff"/><circle cx="5" cy="4.300" r=".8" fill="#050505"/><path d="M1.700 8.300l4.600-.9-3.400 2.500z" fill="#fff"/></svg>
<svg style="position:absolute;left:1180px;top:508px;" width="17.4" height="14.4" viewBox="0 0 17.400 14.400"><path d="M11.700 0.300c.4 2.600.8 5.300 1.500 7.900H4.300C7.600 6.300 10.100 3.500 11.700 0.300z" fill="#050505"/><path d="M0.300 8.200h16.800" stroke="#777" stroke-width=".7"/><path d="M5.500 8.700h7.800l-.6 2.200H7.600z" fill="#8a8a8a"/><path d="M8.600 11.400h3.800l-.3 1.100H9.300z" fill="#222"/><path d="M9.800 13h2.200l-.2.900h-1.600z" fill="#050505"/></svg>
<div style="position:absolute;top:575.36px;font-size:9.5px;line-height:9.5px;font-weight:400;color:#5d5c72;white-space:nowrap;left:666px;transform:scaleX(0.9339);transform-origin:0 50%;-webkit-text-stroke:.22px;">REVIEWS</div>
<div style="position:absolute;left:666px;top:592px;width:32.5px;height:32.5px;background:#6262f4;border-radius:50%;"></div>
<svg style="position:absolute;left:673px;top:599.3px;" width="18.2" height="18.2" viewBox="0 0 512 512"><path fill="#fff" d="M104 224H24c-13.255 0-24 10.745-24 24v240c0 13.255 10.745 24 24 24h80c13.255 0 24-10.745 24-24V248c0-13.255-10.745-24-24-24zM64 472c-13.255 0-24-10.745-24-24s10.745-24 24-24 24 10.745 24 24-10.745 24-24 24zM384 81.452c0 42.416-25.970 66.208-33.277 94.548h101.723c33.397 0 59.397 27.746 59.553 58.098.084 17.938-7.546 37.249-19.439 49.197l-.110.110c9.836 23.337 8.237 56.037-9.308 79.469 8.681 25.895-.069 57.704-16.382 74.757 4.298 17.598 2.244 32.575-6.148 44.632C440.202 511.587 389.616 512 346.839 512l-2.845-.001c-48.287-.017-87.806-17.598-119.560-31.725-15.957-7.099-36.821-15.887-52.651-16.178-6.540-.120-11.783-5.457-11.783-11.998v-213.770c0-3.200 1.282-6.271 3.558-8.521 39.614-39.144 56.648-80.587 89.117-113.111 14.804-14.832 20.188-37.236 25.393-58.902C282.515 39.293 291.817 0 312 0c24 0 72 8 72 81.452z"/></svg>
<div style="position:absolute;left:704.7px;top:592px;width:32.5px;height:32.5px;background:#ebebeb;border-radius:50%;"></div>
<svg style="position:absolute;left:711.8px;top:599.4px;" width="18.4" height="18.4" viewBox="0 0 18.400 18.400"><g fill="none" stroke="#1b1a3e" stroke-width="1.150" stroke-linejoin="round" stroke-linecap="round"><rect x="0.800" y="1.300" width="4" height="9.700" rx="0.700"/><path d="M4.800 2.500C6.900 2.500 7.800 1 10.800 1h2.700c1.900 0 2.800 1 2.500 2.700.900.600 1.200 1.800.7 2.700.800.800.800 2 .2 2.700.500.800.100 2.400-1.600 2.400h-3.600c0 1.400 1 2.200 1 3.800 0 1.300-.700 2-2 2-1-1-.500-2.600-1.600-3.800C8 12.300 6.800 10.100 5.600 9.700H4.800"/></g><circle cx="2.800" cy="9.100" r="0.650" fill="#1b1a3e"/></svg>
<div style="position:absolute;top:601.07px;font-size:11.5px;line-height:11.5px;font-weight:700;color:#1b1a3e;white-space:nowrap;letter-spacing:0.29px;left:749px;">1 review</div>
<div style="position:absolute;left:749px;top:615px;width:47.5px;height:1px;background:#1b1a3e;opacity:.5"></div>
<div style="position:absolute;left:749px;top:616px;width:47.5px;height:1px;background:#1b1a3e"></div>
<div style="position:absolute;top:630.14px;font-size:12px;line-height:12px;font-weight:400;color:#1b1a3e;white-space:nowrap;letter-spacing:0.45px;left:666.3px;">100%</div>
<div style="position:absolute;top:630.14px;font-size:12px;line-height:12px;font-weight:400;color:#1b1a3e;white-space:nowrap;letter-spacing:0.8px;left:711.5px;">0%</div>
<div style="position:absolute;top:575.36px;font-size:9.5px;line-height:9.5px;font-weight:400;color:#5d5c72;white-space:nowrap;left:954.3px;transform:scaleX(0.9064);transform-origin:0 50%;-webkit-text-stroke:.22px;">TRUST RULES</div>
<svg style="position:absolute;left:954px;top:592.4px;" width="17.5" height="17.5" viewBox="0 0 17.500 17.500"><circle cx="8.750" cy="8.750" r="7.900" fill="none" stroke="#4caf50" stroke-width="1.100"/><path d="M5 9.100l2.700 2.700L12.700 6" fill="none" stroke="#4caf50" stroke-width="1.200" stroke-linecap="round" stroke-linejoin="round"/></svg>
<div style="position:absolute;top:594.84px;font-size:12px;line-height:12px;font-weight:700;color:#1b1a3e;white-space:nowrap;letter-spacing:-0.19px;left:978px;">22 passed</div>
<div style="position:absolute;left:978px;top:609px;width:56.3px;height:1px;background:#1b1a3e;opacity:.5"></div>
<div style="position:absolute;left:978px;top:610px;width:56.3px;height:1px;background:#1b1a3e"></div>
<svg style="position:absolute;left:954px;top:617.5px;" width="17.5" height="17.5" viewBox="0 0 17.500 17.500"><circle cx="8.750" cy="8.750" r="7.900" fill="none" stroke="#c9573f" stroke-width="1.100"/><path d="M8.750 4.600v5.300" stroke="#c9573f" stroke-width="1.500" stroke-linecap="round"/><circle cx="8.750" cy="12.600" r="0.950" fill="#c9573f"/></svg>
<div style="position:absolute;top:619.44px;font-size:12px;line-height:12px;font-weight:700;color:#1b1a3e;white-space:nowrap;left:978px;">0 failed</div>
<div style="position:absolute;left:978px;top:634px;width:41px;height:1px;background:#1b1a3e;opacity:.5"></div>
<div style="position:absolute;left:978px;top:635px;width:41px;height:1px;background:#1b1a3e"></div>
<div style="position:absolute;top:681.96px;font-size:9.5px;line-height:9.5px;font-weight:400;color:#5d5c72;white-space:nowrap;left:666px;transform:scaleX(0.9199);transform-origin:0 50%;-webkit-text-stroke:.22px;">DATA REFRESHED ON</div>
<div style="position:absolute;top:694.96px;font-size:18px;line-height:18px;font-weight:700;color:#1b1a3e;white-space:nowrap;letter-spacing:0.2px;left:666px;">Aug 28, 2024,</div>
<div style="position:absolute;top:719.16px;font-size:18px;line-height:18px;font-weight:700;color:#1b1a3e;white-space:nowrap;letter-spacing:0.12px;left:666px;">02:01</div>
<div style="position:absolute;top:681.96px;font-size:9.5px;line-height:9.5px;font-weight:400;color:#5d5c72;white-space:nowrap;left:829.7px;transform:scaleX(0.9010);transform-origin:0 50%;-webkit-text-stroke:.22px;">LAST ACCESSED</div>
<div style="position:absolute;top:694.96px;font-size:18px;line-height:18px;font-weight:700;color:#1b1a3e;white-space:nowrap;letter-spacing:0.08px;left:829.7px;">Aug 20,</div>
<div style="position:absolute;top:719.16px;font-size:18px;line-height:18px;font-weight:700;color:#1b1a3e;white-space:nowrap;letter-spacing:0.66px;left:829.7px;">2024</div>
<div style="position:absolute;top:681.96px;font-size:9.5px;line-height:9.5px;font-weight:400;color:#5d5c72;white-space:nowrap;left:954.3px;transform:scaleX(0.9310);transform-origin:0 50%;-webkit-text-stroke:.22px;">ROW COUNT</div>
<div style="position:absolute;top:694.96px;font-size:18px;line-height:18px;font-weight:700;color:#1b1a3e;white-space:nowrap;letter-spacing:0.47px;left:953.5px;">164,183</div>
<div style="position:absolute;top:681.96px;font-size:9.5px;line-height:9.5px;font-weight:400;color:#5d5c72;white-space:nowrap;left:1043.7px;transform:scaleX(0.9163);transform-origin:0 50%;-webkit-text-stroke:.22px;">LATEST LOAD</div>
<div style="position:absolute;left:1046px;top:698px;width:116px;height:10.8px;background:#e9e9fc;"></div>
<div style="position:absolute;left:1046px;top:698px;width:97.2px;height:10.8px;background:#6262f4;"></div>
<div style="position:absolute;left:1143px;top:695.7px;width:1.3px;height:15.2px;background:#e23b2e;"></div>
<div style="position:absolute;left:1166px;top:709px;width:35.5px;height:35.5px;background:#b9b9b9;border-radius:50%;"></div>
<svg style="position:absolute;left:1175.7px;top:718.7px;" width="16" height="16" viewBox="0 0 16 16"><g fill="none" stroke="#1a1a1a" stroke-width="1.200" stroke-linecap="round" stroke-linejoin="round"><path d="M1.800 14.200L14.200 1.800"/><path d="M9.800 1.800h4.400v4.400"/><path d="M1.800 9.800v4.400h4.400"/></g></svg>
<div style="position:absolute;left:68px;top:817.5px;width:1148px;height:160px;background:#fff;border-radius:5px 5px 0 0;box-shadow:0 1px 3px rgba(0,0,0,.13),0 0 1px rgba(0,0,0,.08);"></div>
<div style="position:absolute;left:68px;top:817.5px;width:108px;height:160px;background:#1d1b42;border-radius:5px 0 0 0;"></div>
<div style="position:absolute;left:68px;top:844px;width:108px;height:24.5px;background:#7b7a95;"></div>
<div style="position:absolute;top:849.62px;font-size:12.5px;line-height:12.5px;font-weight:700;color:#fff;white-space:nowrap;letter-spacing:0.39px;left:122.3px;transform:translateX(-50%);">2023-12-22</div>
<div style="position:absolute;top:879.62px;font-size:12.5px;line-height:12.5px;font-weight:700;color:#fff;white-space:nowrap;letter-spacing:0.39px;left:122.3px;transform:translateX(-50%);">2023-05-22</div>
<div style="position:absolute;top:909.62px;font-size:12.5px;line-height:12.5px;font-weight:700;color:#fff;white-space:nowrap;letter-spacing:0.39px;left:122.3px;transform:translateX(-50%);">2023-01-25</div>
<div style="position:absolute;top:845.20px;font-size:13px;line-height:13px;font-weight:700;color:#1b1a3e;white-space:nowrap;letter-spacing:0.47px;left:194px;">Dec 22, 2023</div>
<div style="position:absolute;top:876.04px;font-size:12px;line-height:12px;font-weight:400;color:#1e1e2a;white-space:nowrap;letter-spacing:0.03px;left:194px;">Provides details on all orders that have been shipped to a user.</div>
<div style="position:absolute;top:910.04px;font-size:12px;line-height:12px;font-weight:400;color:#1e1e2a;white-space:nowrap;letter-spacing:0.07px;left:194px;">Does not include any other order status.</div>
<div style="position:absolute;left:1137px;top:835px;width:61px;height:32.5px;background:#fff;box-sizing:border-box;border:1.300px solid #22213f;border-radius:5px;"></div>
<div style="position:absolute;top:844.70px;font-size:13px;line-height:13px;font-weight:400;color:#1b1a3e;white-space:nowrap;letter-spacing:-0.2px;left:1167.5px;transform:translateX(-50%);">Edit</div>
<div style="position:absolute;left:51px;top:207.8px;width:394px;height:42.6px;box-sizing:border-box;border:3px solid #6262f4;border-radius:7px;box-shadow:0 0 11px 3px rgba(98,98,244,.42);"></div>
<div style="position:absolute;left:108px;top:268px;width:280px;height:120px;background:#6262f4;border-radius:9px;box-shadow:0 3px 10px rgba(0,0,0,.16);"></div>
<svg style="position:absolute;left:241.2px;top:261.7px;" width="14" height="6.5" viewBox="0 0 14 6.500"><path d="M0 6.500L7 0l7 6.500z" fill="#6262f4"/></svg>
<div style="position:absolute;top:284.66px;font-size:16px;line-height:16px;font-weight:400;color:#fff;white-space:nowrap;letter-spacing:-0.02px;left:124.3px;-webkit-text-stroke:.3px #fff;">You can see a business</div>
<div style="position:absolute;top:308.66px;font-size:16px;line-height:16px;font-weight:400;color:#fff;white-space:nowrap;letter-spacing:0.29px;left:124.3px;-webkit-text-stroke:.3px #fff;">description for the Tile.</div>
<div style="position:absolute;top:347.60px;font-size:15px;line-height:15px;font-weight:400;color:#e4e4fd;white-space:nowrap;letter-spacing:0.04px;left:124.5px;">4 of 20</div>
<div style="position:absolute;left:292px;top:340px;width:36px;height:32px;background:rgba(255,255,255,.21);border-radius:6px;"></div>
<div style="position:absolute;left:336px;top:340px;width:36px;height:32px;background:rgba(255,255,255,.21);border-radius:6px;"></div>
<svg style="position:absolute;left:303px;top:349.5px;" width="14" height="13" viewBox="0 0 14 13"><g fill="none" stroke="#fff" stroke-width="1.800" stroke-linecap="round" stroke-linejoin="round"><path d="M12.300 6.300H2M6 2.200L1.900 6.300 6 10.400"/></g></svg>
<svg style="position:absolute;left:347px;top:349.5px;" width="14" height="13" viewBox="0 0 14 13"><g fill="none" stroke="#fff" stroke-width="1.800" stroke-linecap="round" stroke-linejoin="round"><path d="M1.700 6.300H12M8 2.200l4.100 4.100L8 10.400"/></g></svg>
</div></div>
</body></html>
